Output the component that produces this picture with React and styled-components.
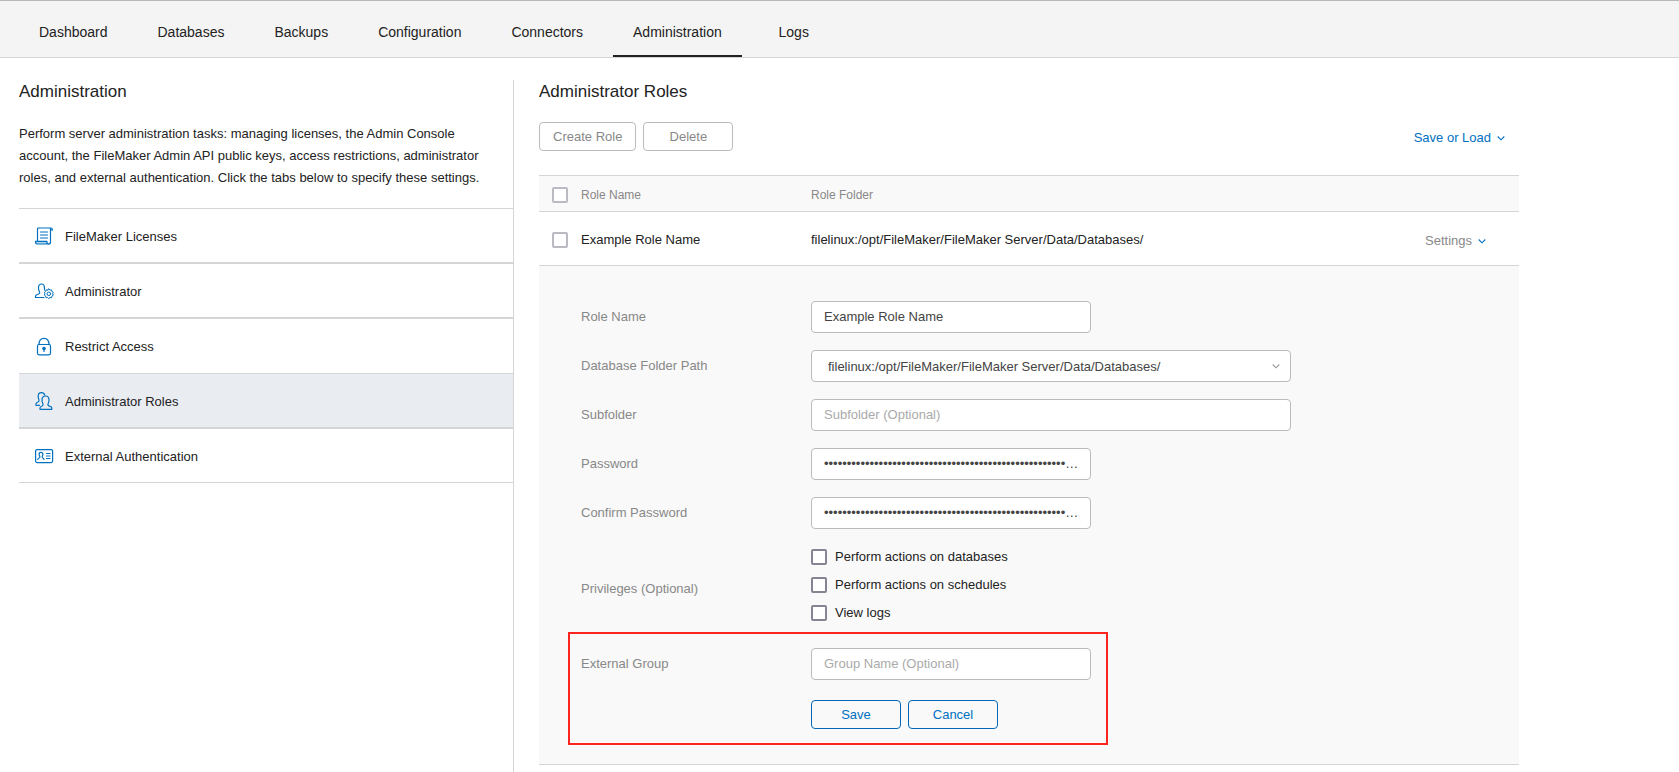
import React, { useState } from "react";
import styled, { createGlobalStyle } from "styled-components";


const GlobalStyle = createGlobalStyle`
  * {
    box-sizing: border-box;
  }
  body {
    margin: 0;
    background: #fff;
    color: #222;
    font-family: "Liberation Sans", Arial, sans-serif;
    font-size: 13px;
  }
  button, input, select {
    font-family: inherit;
    font-size: 13px;
  }
`

const Page = styled.div`
  min-height: 100vh;
  display: flex;
  flex-direction: column;
`

const Nav = styled.nav`
  display: flex;
  gap: 10px;
  padding: 0 19px;
  background: #f4f4f4;
  border-top: 1px solid #b8b8b8;
  border-bottom: 1px solid #d5d5d5;
`

const Tab = styled.a`
  min-width: 84px;
  padding: 23px 20px 15px;
  line-height: 16px;
  font-size: 14px;
  text-align: center;
  color: #222;
  text-decoration: none;
  border-bottom: 2px solid ${props => props.$active ? "#222" : "transparent"};
`

const Content = styled.div`
  flex: 1;
  display: flex;
  padding-top: 22px;
`

const Sidebar = styled.aside`
  flex: none;
  width: 514px;
  padding-left: 19px;
  border-right: 1px solid #d5d5d5;
`

const Main = styled.main`
  flex: 1;
  min-width: 0;
  padding: 0 160px 7px 25px;
`

const Title = styled.h1`
  margin: 0;
  font-size: 17px;
  font-weight: normal;
  line-height: 24px;
`

const Description = styled.p`
  margin: 19px 0;
  padding-right: 14px;
  line-height: 22px;
`

const Menu = styled.ul`
  margin: 0;
  padding: 0;
  list-style: none;
`

const MenuLink = styled.a`
  display: flex;
  align-items: center;
  gap: 11px;
  height: 55px;
  padding: 2px 0 0 15px;
  color: #222;
  text-decoration: none;
  border-top: 1px solid #d5d5d5;
  border-bottom: 1px solid ${props => props.$flush ? "transparent" : "#d5d5d5"};
  background: ${props => props.$active ? "#e9ecf1" : "#fff"};
`

const MenuIcon = styled.svg`
  width: 20px;
  height: 20px;
  fill: none;
  stroke: #0070c0;
  stroke-width: 1.2;
  stroke-linejoin: round;
  stroke-linecap: round;
`

const Toolbar = styled.div`
  display: flex;
  align-items: center;
  gap: 7px;
  margin: 18px 0 24px;
`

const Button = styled.button`
  height: 29px;
  min-width: 90px;
  padding: 0 13px;
  border: 1px solid ${props => props.$primary ? "#0067b9" : "#bbb"};
  border-radius: 4px;
  background: ${props => props.$primary ? "transparent" : "#fff"};
  color: ${props => props.$primary ? "#0070c0" : "#888"};
`

const MenuButton = styled.button`
  display: inline-flex;
  align-items: center;
  gap: 6px;
  margin-left: auto;
  margin-right: ${props => props.$inset};
  padding: 2px 0 0;
  border: 0;
  background: none;
  color: ${props => props.$color};
`

const ChevronIcon = styled.svg`
  width: 8px;
  height: 8px;
  fill: none;
  stroke: ${props => props.$color || "#0070c0"};
  stroke-width: 1.1;
`

const Table = styled.table`
  width: 100%;
  table-layout: fixed;
  border-collapse: separate;
  border-spacing: 0;
  border-top: 1px solid #d5d5d5;
`

const HeadCell = styled.th`
  height: 36px;
  width: ${props => props.$width};
  padding: ${props => props.$check ? "2px 0 0 13px" : "2px 0 0"};
  font-size: 12px;
  font-weight: normal;
  text-align: left;
  color: #888;
  background: #f9f9f9;
  border-bottom: 1px solid #d5d5d5;
`

const Cell = styled.td`
  height: 54px;
  padding: ${props => props.$check ? "2px 0 0 13px" : "2px 0 0"};
  text-align: ${props => props.$right ? "right" : "left"};
  white-space: nowrap;
  border-bottom: 1px solid #d5d5d5;
`

const FormCell = styled.td`
  padding: 35px 29px 19px;
  background: #f9f9f9;
  border-bottom: 1px solid #d5d5d5;
`

const Checkbox = styled.input.attrs({ type: "checkbox" })`
  appearance: none;
  display: block;
  flex: none;
  width: 16px;
  height: 16px;
  margin: 0;
  background: #fff;
  border: 2px solid ${props => props.$strong ? "#858492" : "#bbbac3"};
  border-radius: 2px;
  &:checked {
    background: #0070c0;
  }
`

const Fields = styled.div`
  display: flex;
  flex-direction: column;
  gap: 17px;
  padding-left: 13px;
`

const Field = styled.div`
  display: grid;
  grid-template-columns: 230px minmax(0, 1fr);
  align-items: center;
`

const Label = styled.label`
  padding-bottom: 2px;
  color: #888;
`

const Input = styled.input`
  width: 100%;
  max-width: ${props => props.$wide ? "480px" : "280px"};
  height: 32px;
  padding: 0 8px 2px 12px;
  color: #444;
  background: #fff;
  border: 1px solid #bbb;
  border-radius: 4px;
  text-overflow: ellipsis;
  &::placeholder {
    color: #aaa;
  }
`

const SelectBox = styled.div`
  position: relative;
  max-width: 480px;
  ${ChevronIcon} {
    position: absolute;
    right: 11px;
    top: 12px;
    pointer-events: none;
  }
`

const Select = styled.select`
  appearance: none;
  display: block;
  width: 100%;
  height: 32px;
  padding: 0 30px 0 16px;
  color: #444;
  background: #fff;
  border: 1px solid #bbb;
  border-radius: 4px;
`

const Privileges = styled.div`
  display: flex;
  flex-direction: column;
  gap: 12px;
  padding: 3px 0 11px;
`

const CheckLabel = styled.label`
  display: flex;
  align-items: center;
  gap: 8px;
  line-height: 16px;
`

const Highlight = styled.div`
  max-width: 540px;
  padding: 14px 15px 14px 11px;
  border: 2px solid #ff231f;
`

const Actions = styled.div`
  display: flex;
  gap: 7px;
  padding: 20px 0 0 230px;
`

const Chevron = ({ color }) => (
  <ChevronIcon $color={color} viewBox="0 0 8 8" aria-hidden="true">
    <path d="M0.7 2.5 4 5.8 7.3 2.5" />
  </ChevronIcon>
)

const icons = {
  license: (
    <>
      <path d="M3.5 14.5V2Q3.5 1 4.5 1H17Q18.5 1 18.5 3H16.5" />
      <path d="M16.5 1.3V15Q16.5 17 14.5 17" />
      <path d="M14.5 17H3Q1.5 17 1.5 14.3H12.8Q12.8 17 14.5 17Z" fill="#b5d7f0" />
      <path d="M6.5 5H13.5M6.5 8H13.5M6.5 11H13.5" />
    </>
  ),
  administrator: (
    <>
      <path d="M10 15.5H1.5V14.3Q1.6 13.3 2.8 12.8L5 11.8Q6 11.2 5.6 10.2Q4.5 8.5 4.5 6Q4.5 2 7.5 2Q10.5 2 10.5 6V8" />
      <path
        d="M14.8 7 16 8.1 17.6 7.9 17.9 9.5 19.3 10.4 18.6 11.8 19.3 13.2 17.9 14.1 17.6 15.7 16 15.5 14.8 16.6 13.6 15.5 12 15.7 11.7 14.1 10.3 13.2 11 11.8 10.3 10.4 11.7 9.5 12 7.9 13.6 8.1Z"
        strokeWidth="1"
      />
      <circle cx="14.8" cy="11.8" r="1.8" strokeWidth="1" />
    </>
  ),
  lock: (
    <>
      <rect x="3.5" y="7.5" width="13" height="10.3" rx="1.5" />
      <path d="M5 7.5Q5 1.3 10 1.3Q15 1.3 15 7.5" />
      <circle cx="10" cy="11.5" r="1.2" fill="#0070c0" />
      <path d="M10 12V14.5" />
    </>
  ),
  roles: (
    <>
      <path d="M5.5 13.3H2V12Q2 10.8 3.5 10.3Q5.5 9.5 5 8Q4.2 6.5 4.2 4Q4.2 0.7 7.5 0.7Q10 0.7 10.7 3" />
      <path d="M6 17.3V16Q6 14.8 7.7 14.2Q9.5 13.5 9 12Q8 10.5 8 8Q8 4 11.5 4Q15 4 15 8Q15 10.5 14 12Q13.5 13.5 15.5 14.2Q17.8 14.8 17.8 16V17.3Z" />
    </>
  ),
  card: (
    <>
      <rect x="1.6" y="2.6" width="17" height="13" rx="1.5" />
      <path d="M3.8 12.5Q3.8 11.3 5.5 10.7Q6.2 10.3 5.7 9.2Q5.1 8 5.1 7.2Q5.1 5.3 7 5.3Q8.9 5.3 8.9 7.2Q8.9 8 8.3 9.2Q7.8 10.3 8.5 10.7Q10 11.3 10 12.5" />
      <path d="M12.5 6.5H16M12.5 9H16M12.5 11.5H16" />
    </>
  ),
}

const tabs = ["Dashboard", "Databases", "Backups", "Configuration", "Connectors", "Administration", "Logs"]

const menu = [
  { icon: "license", text: "FileMaker Licenses" },
  { icon: "administrator", text: "Administrator" },
  { icon: "lock", text: "Restrict Access", flush: true },
  { icon: "roles", text: "Administrator Roles", active: true },
  { icon: "card", text: "External Authentication" },
]

const privileges = ["Perform actions on databases", "Perform actions on schedules", "View logs"]

const folder = "filelinux:/opt/FileMaker/FileMaker Server/Data/Databases/"

const secret = "x".repeat(80)

const RoleForm = () => {
  const [name, setName] = useState("Example Role Name")

  return (
    <form onSubmit={e => e.preventDefault()}>
      <Fields>
        <Field>
          <Label htmlFor="role-name">Role Name</Label>
          <Input id="role-name" value={name} onChange={e => setName(e.target.value)} />
        </Field>
        <Field>
          <Label htmlFor="folder">Database Folder Path</Label>
          <SelectBox>
            <Select id="folder">
              <option>{folder}</option>
            </Select>
            <Chevron color="#999" />
          </SelectBox>
        </Field>
        <Field>
          <Label htmlFor="subfolder">Subfolder</Label>
          <Input id="subfolder" $wide placeholder="Subfolder (Optional)" />
        </Field>
        <Field>
          <Label htmlFor="password">Password</Label>
          <Input id="password" type="password" defaultValue={secret} />
        </Field>
        <Field>
          <Label htmlFor="confirm">Confirm Password</Label>
          <Input id="confirm" type="password" defaultValue={secret} />
        </Field>
        <Field role="group" aria-labelledby="privileges">
          <Label as="span" id="privileges">Privileges (Optional)</Label>
          <Privileges>
            {privileges.map(text => (
              <CheckLabel key={text}>
                <Checkbox $strong />
                {text}
              </CheckLabel>
            ))}
          </Privileges>
        </Field>
      </Fields>
      <Highlight>
        <Field>
          <Label htmlFor="group">External Group</Label>
          <Input id="group" placeholder="Group Name (Optional)" />
        </Field>
        <Actions>
          <Button $primary type="submit">Save</Button>
          <Button $primary type="button">Cancel</Button>
        </Actions>
      </Highlight>
    </form>
  )
}

const App = () => (
  <Page>
    <GlobalStyle />
    <Nav>
      {tabs.map(tab => (
        <Tab key={tab} href="#" $active={tab === "Administration"}>{tab}</Tab>
      ))}
    </Nav>
    <Content>
      <Sidebar>
        <Title>Administration</Title>
        <Description>
          Perform server administration tasks: managing licenses, the Admin Console
          account, the FileMaker Admin API public keys, access restrictions, administrator
          roles, and external authentication. Click the tabs below to specify these settings.
        </Description>
        <Menu>
          {menu.map(item => (
            <li key={item.text}>
              <MenuLink href="#" $active={item.active} $flush={item.flush}>
                <MenuIcon viewBox="0 0 20 20" aria-hidden="true">{icons[item.icon]}</MenuIcon>
                {item.text}
              </MenuLink>
            </li>
          ))}
        </Menu>
      </Sidebar>
      <Main>
        <Title as="h2">Administrator Roles</Title>
        <Toolbar>
          <Button>Create Role</Button>
          <Button>Delete</Button>
          <MenuButton $color="#0070c0" $inset="14px">
            Save or Load
            <Chevron />
          </MenuButton>
        </Toolbar>
        <Table>
          <thead>
            <tr>
              <HeadCell $check $width="42px"><Checkbox aria-label="Select all roles" /></HeadCell>
              <HeadCell $width="230px">Role Name</HeadCell>
              <HeadCell>Role Folder</HeadCell>
              <HeadCell $width="160px" aria-label="Settings" />
            </tr>
          </thead>
          <tbody>
            <tr>
              <Cell $check><Checkbox aria-label="Select Example Role Name" /></Cell>
              <Cell>Example Role Name</Cell>
              <Cell>{folder}</Cell>
              <Cell $right>
                <MenuButton $color="#888" $inset="33px">
                  Settings
                  <Chevron />
                </MenuButton>
              </Cell>
            </tr>
            <tr>
              <FormCell colSpan={4}><RoleForm /></FormCell>
            </tr>
          </tbody>
        </Table>
      </Main>
    </Content>
  </Page>
)

export default App;
